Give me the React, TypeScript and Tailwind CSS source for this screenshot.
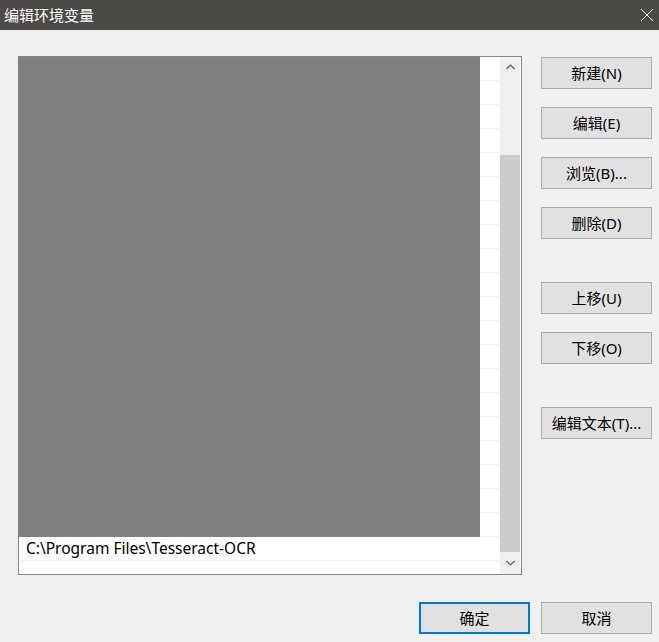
import React from "react";

const font = { fontFamily: '"Noto Sans", "Noto Sans CJK SC", sans-serif' };

function Btn({ label, primary }: { label: string; primary?: boolean }) {
  return (
    <div
      className={
        "w-[111px] h-[32px] flex items-center justify-center bg-[#e1e1e1] text-[15px] text-black " +
        (primary ? "border-2 border-[#0078d7]" : "border border-[#adadad]")
      }
    >
      {label}
    </div>
  );
}

export default function App() {
  const rows = Array.from({ length: 21 });
  return (
    <div className="w-[659px] h-[642px] bg-[#f0f0f0] flex flex-col" style={font}>
      <div className="h-[30px] bg-[#4b4a47] flex items-center justify-between pl-[4px] pr-[4px]">
        <span className="text-white text-[15px] leading-none">编辑环境变量</span>
        <svg width="14" height="14" viewBox="0 0 14 14" className="mr-[1px]">
          <path d="M1 1 L13 13 M13 1 L1 13" stroke="white" strokeWidth="1" fill="none" />
        </svg>
      </div>
      <div className="flex pl-[18px] pt-[26px] gap-[19px]">
        <div className="w-[504px] h-[519px] border border-[#828790] bg-white flex pr-[1px]">
          <div className="relative flex-1 flex flex-col pl-[1px]">
            {rows.map((_, i) => (
              <div key={i} className="h-[24px] shrink-0 border-b border-[#f0f0f0] flex items-center pl-[6px] pt-[1px] text-[15.5px] text-black">
                {i === 20 ? "C:\\Program Files\\Tesseract-OCR" : ""}
              </div>
            ))}
            <div className="absolute left-0 top-0 w-[461px] h-[480px] bg-[#808080]" />
          </div>
          <div className="w-[20px] bg-[#f0f0f0] flex flex-col">
            <div className="h-[20px] flex items-center justify-center">
              <svg width="9" height="6" viewBox="0 0 9 6">
                <path d="M0.5 5 L4.5 1 L8.5 5" stroke="#606060" strokeWidth="1.2" fill="none" />
              </svg>
            </div>
            <div className="h-[78px]" />
            <div className="h-[397px] bg-[#cdcdcd]" />
            <div className="flex-1 flex items-center justify-center">
              <svg width="9" height="6" viewBox="0 0 9 6">
                <path d="M0.5 1 L4.5 5 L8.5 1" stroke="#606060" strokeWidth="1.2" fill="none" />
              </svg>
            </div>
          </div>
        </div>
        <div className="flex flex-col pt-[1px]">
          <div className="flex flex-col gap-[18px]">
            <Btn label="新建(N)" />
            <Btn label="编辑(E)" />
            <Btn label="浏览(B)..." />
            <Btn label="删除(D)" />
          </div>
          <div className="flex flex-col gap-[18px] mt-[43px]">
            <Btn label="上移(U)" />
            <Btn label="下移(O)" />
          </div>
          <div className="mt-[43px]">
            <Btn label="编辑文本(T)..." />
          </div>
        </div>
      </div>
      <div className="flex justify-end gap-[11px] pr-[7px] mt-[27px]">
        <Btn label="确定" primary />
        <Btn label="取消" />
      </div>
    </div>
  );
}
